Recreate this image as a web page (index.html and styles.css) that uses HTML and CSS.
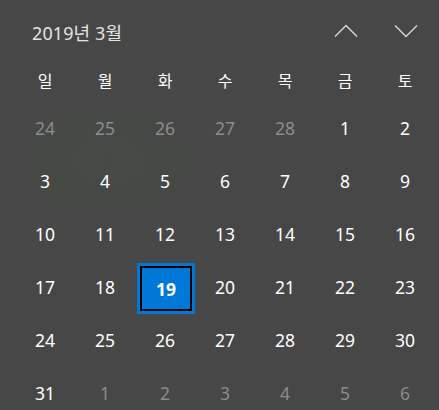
FILE: index.html
```html
<!DOCTYPE html>
<html lang="ko">
<head>
  <meta charset="UTF-8" />
  <meta name="viewport" content="width=device-width, initial-scale=1.0" />
  <title>달력</title>
  <link rel="stylesheet" href="styles.css">
</head>
<body>
  <div class="calendar">
    <div class="cal-header">
      <span class="cal-title">2019년 3월</span>
      <div class="cal-nav">
        <button class="nav-btn" aria-label="이전 달">
          <svg width="24" height="14" viewBox="0 0 24 14"><path d="M1 12.5 L12 1.5 L23 12.5" fill="none" stroke="#d4d4d4" stroke-width="1.5"/></svg>
        </button>
        <button class="nav-btn" aria-label="다음 달">
          <svg width="24" height="14" viewBox="0 0 24 14"><path d="M1 1.5 L12 12.5 L23 1.5" fill="none" stroke="#d4d4d4" stroke-width="1.5"/></svg>
        </button>
      </div>
    </div>

    <div class="weekdays">
      <span>일</span><span>월</span><span>화</span><span>수</span><span>목</span><span>금</span><span>토</span>
    </div>

    <div class="days">
      <span class="other">24</span><span class="other">25</span><span class="other">26</span><span class="other">27</span><span class="other">28</span><span>1</span><span>2</span>
      <span>3</span><span>4</span><span>5</span><span>6</span><span>7</span><span>8</span><span>9</span>
      <span>10</span><span>11</span><span>12</span><span>13</span><span>14</span><span>15</span><span>16</span>
      <span>17</span><span>18</span><span class="today">19</span><span>20</span><span>21</span><span>22</span><span>23</span>
      <span>24</span><span>25</span><span>26</span><span>27</span><span>28</span><span>29</span><span>30</span>
      <span>31</span><span class="other">1</span><span class="other">2</span><span class="other">3</span><span class="other">4</span><span class="other">5</span><span class="other">6</span>
    </div>
  </div>
</body>
</html>
```

FILE: styles.css
```css
html, body {
  margin: 0;
  padding: 0;
  height: 100%;
}
body {
  background: #474747;
  background-image: radial-gradient(ellipse 150px 100px at 110px 160px, rgba(68, 76, 68, 0.45), rgba(71, 71, 71, 0) 100%);
  font-family: "Noto Sans", "Noto Sans CJK KR", sans-serif;
  color: #fff;
  overflow: hidden;
}
.calendar {
  padding: 0 4px 0 15px;
}
.cal-header {
  display: flex;
  align-items: center;
  justify-content: space-between;
  height: 64px;
  margin-right: -1px;
}
.cal-title {
  padding-left: 17px;
  font-size: 18px;
  color: #e4e4e4;
  letter-spacing: 0.1px;
}
.cal-nav {
  display: flex;
  margin-top: -3px;
}
.nav-btn {
  width: 60px;
  height: 40px;
  border: none;
  background: transparent;
  padding: 0;
  display: flex;
  align-items: center;
  justify-content: center;
  cursor: pointer;
}
.weekdays,
.days {
  display: grid;
  grid-template-columns: repeat(7, 60px);
}
.weekdays {
  height: 32px;
  align-items: center;
  font-family: "Noto Sans CJK KR", sans-serif;
  font-size: 16px;
}
.weekdays span,
.days span {
  text-align: center;
}
.days {
  margin-top: 5px;
  grid-auto-rows: 53px;
  font-size: 17.5px;
}
.days span {
  display: flex;
  align-items: center;
  justify-content: center;
}
.days .other {
  color: #8c8c8c;
}
.days .today {
  box-sizing: border-box;
  margin: 3px 0 -1px 2px;
  background: #0078d7;
  border: 3px solid #0078d7;
  box-shadow: inset 0 0 0 2px #000;
  font-weight: 700;
}
```
